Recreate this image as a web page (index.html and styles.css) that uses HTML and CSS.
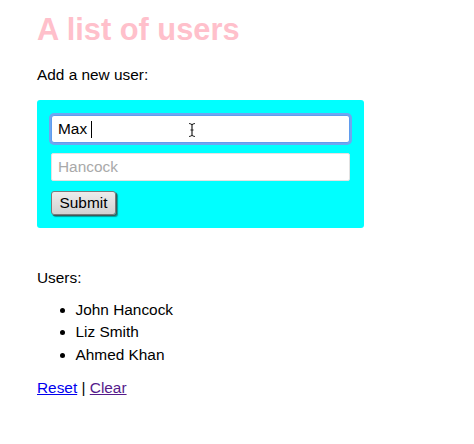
FILE: index.html
```html
<!DOCTYPE html>
<html lang="en">
<head>
<meta charset="utf-8">
<title>A list of users</title>
<link rel="stylesheet" href="styles.css">
</head>
<body>
<div class="page">
  <h1 class="title">A list of users</h1>
  <p class="intro">Add a new user:</p>
  <form class="user-form">
    <div class="field">
      <input class="text-input is-focused" type="text" value="Max ">
      <span class="caret"></span>
      <svg class="ibeam" width="8" height="16" viewBox="0 0 8 16" aria-hidden="true">
        <path d="M1 1.5 Q3 1.5 4 3 Q5 1.5 7 1.5 M4 3 V13 M1 14.5 Q3 14.5 4 13 Q5 14.5 7 14.5 M2.5 8 H5.5" fill="none" stroke="#222" stroke-width="1.2"/>
      </svg>
    </div>
    <input class="text-input" type="text" placeholder="Hancock">
    <button class="submit" type="button">Submit</button>
  </form>
  <p class="users-label">Users:</p>
  <ul class="user-list">
    <li>John Hancock</li>
    <li>Liz Smith</li>
    <li>Ahmed Khan</li>
  </ul>
  <p class="actions"><a class="link" href="#reset">Reset</a> | <a class="link visited" href="#clear">Clear</a></p>
</div>
</body>
</html>
```

FILE: styles.css
```css
html, body {
  margin: 0;
  background: #ffffff;
}

body {
  font-family: "Liberation Sans", Arial, Helvetica, sans-serif;
  font-size: 15.4px;
  color: #000000;
}

.page {
  padding: 12px 0 0 37px;
}

.title {
  margin: 0;
  font-size: 30.8px;
  font-weight: bold;
  color: #ffc0cb;
  line-height: normal;
}

.intro {
  margin: 17.6px 0 0;
}

.user-form {
  margin-top: 16.3px;
  width: 327px;
  box-sizing: border-box;
  padding: 15px 14px 13px;
  background: #00ffff;
  border-radius: 3px;
}

.field {
  position: relative;
}

.text-input {
  display: block;
  width: 100%;
  height: 28px;
  box-sizing: border-box;
  margin: 0 0 10px;
  padding: 0 6px;
  border: 1px solid #e2e2e2;
  border-radius: 2px;
  background: #ffffff;
  font-family: inherit;
  font-size: 15.4px;
  color: #000000;
  outline: none;
}

.text-input::placeholder {
  color: #a9a9a9;
}

.text-input.is-focused {
  border-color: #5f9cee;
  box-shadow: 0 0 0 2px #6fa6f1;
  border-radius: 3px;
}

.caret {
  position: absolute;
  left: 40px;
  top: 6px;
  width: 1px;
  height: 17px;
  background: #000000;
}

.ibeam {
  position: absolute;
  left: 137px;
  top: 7px;
}

.submit {
  display: block;
  width: 65px;
  height: 24px;
  padding: 0;
  border: 1px solid #7a7a7a;
  border-radius: 3px;
  background: linear-gradient(#ececec, #d2d2d2);
  box-shadow: 1px 1px 0 #3d5a5a, 2px 2px 1px rgba(0, 60, 60, 0.5);
  font-family: inherit;
  font-size: 15.4px;
  color: #000000;
}

.users-label {
  margin: 41px 0 0;
}

.user-list {
  margin: 12px 0 0;
  padding-left: 38.5px;
  line-height: 22.5px;
}

.actions {
  margin: 12.6px 0 0;
}

.link {
  color: #0000ee;
}

.link.visited {
  color: #551a8b;
}
```
